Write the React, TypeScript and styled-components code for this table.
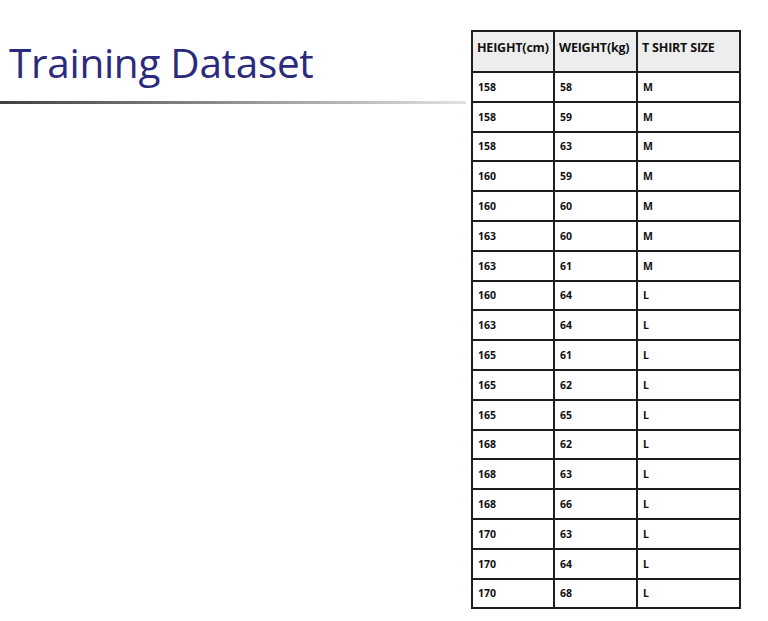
import React from "react";
import styled, { createGlobalStyle } from "styled-components";

const rows: [number, number, string][] = [
	[158, 58, "M"],
	[158, 59, "M"],
	[158, 63, "M"],
	[160, 59, "M"],
	[160, 60, "M"],
	[163, 60, "M"],
	[163, 61, "M"],
	[160, 64, "L"],
	[163, 64, "L"],
	[165, 61, "L"],
	[165, 62, "L"],
	[165, 65, "L"],
	[168, 62, "L"],
	[168, 63, "L"],
	[168, 66, "L"],
	[170, 63, "L"],
	[170, 64, "L"],
	[170, 68, "L"],
];

const App = () => {
	return (
		<>
			<GlobalStyle />
			<Slide>
				<TitleArea>
					<Title>Training Dataset</Title>
					<Rule />
				</TitleArea>
				<DataTable>
					<colgroup>
						<col style={{ width: 82 }} />
						<col style={{ width: 83 }} />
						<col style={{ width: 103 }} />
					</colgroup>
					<thead>
						<tr>
							<HeadCell>HEIGHT(cm)</HeadCell>
							<HeadCell>WEIGHT(kg)</HeadCell>
							<HeadCell>T SHIRT SIZE</HeadCell>
						</tr>
					</thead>
					<tbody>
						{rows.map(([h, w, size], i) => (
							<tr key={i}>
								<Cell>{h}</Cell>
								<Cell>{w}</Cell>
								<Cell>{size}</Cell>
							</tr>
						))}
					</tbody>
				</DataTable>
			</Slide>
		</>
	);
};

export default App;

const GlobalStyle = createGlobalStyle`
	body {
		margin: 0;
		background: #ffffff;
		font-family: "Open Sans", "Liberation Sans", sans-serif;
	}
`;

const Slide = styled.div`
	width: 768px;
	height: 621px;
	display: flex;
	align-items: flex-start;
	gap: 5px;
	overflow: hidden;
`;

const TitleArea = styled.div`
	width: 466px;
	flex-shrink: 0;
	padding-top: 38px;
`;

const Title = styled.h1`
	margin: 0 0 0 9px;
	font-family: "Open Sans", "Liberation Sans", sans-serif;
	font-weight: 400;
	font-size: 40.5px;
	line-height: 50px;
	color: #2b2a7c;
	letter-spacing: -0.3px;
`;

const Rule = styled.div`
	margin-top: 13px;
	height: 3px;
	background: linear-gradient(to right, #404040, #e2e2e2);
`;

const DataTable = styled.table`
	margin-top: 30px;
	border-collapse: collapse;
	table-layout: fixed;
	width: 268px;
	border: 2px solid #1e1e1e;
`;

const HeadCell = styled.th`
	height: 32px;
	padding: 7px 0 0 4px;
	vertical-align: top;
	text-align: left;
	background: #ededed;
	border: 2px solid #1e1e1e;
	font-size: 12.5px;
	font-weight: 700;
	color: #111111;
	white-space: nowrap;
	letter-spacing: -0.2px;
`;

const Cell = styled.td`
	height: 27.8px;
	padding: 0 0 0 5px;
	vertical-align: middle;
	text-align: left;
	border: 2px solid #1e1e1e;
	font-size: 10.5px;
	font-weight: 700;
	color: #111111;
`;
